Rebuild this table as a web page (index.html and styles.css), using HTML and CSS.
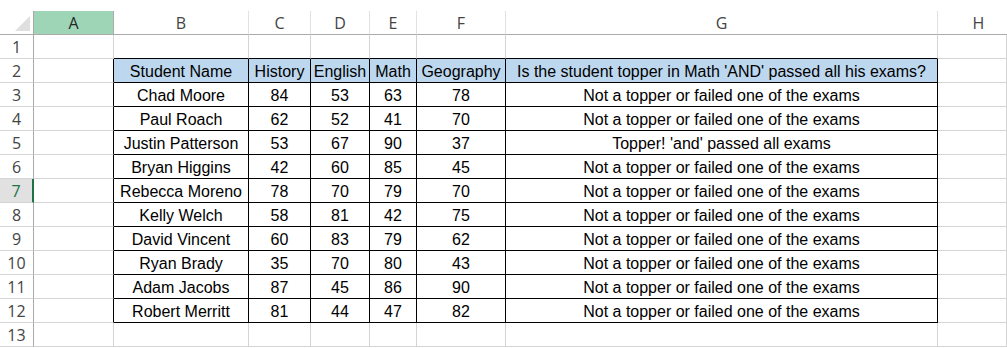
FILE: index.html
```html
<!DOCTYPE html>
<html>
<head>
<meta charset="utf-8">
<link rel="stylesheet" href="styles.css">
</head>
<body>
<div class="sheet">
  <div class="corner"><span class="tri"></span></div>
  <div class="ch sel">A</div>
  <div class="ch">B</div>
  <div class="ch">C</div>
  <div class="ch">D</div>
  <div class="ch">E</div>
  <div class="ch">F</div>
  <div class="ch">G</div>
  <div class="ch last">H</div>

  <div class="rh">1</div>
  <div class="c"></div>
  <div class="c tb"></div><div class="c tb"></div><div class="c tb"></div><div class="c tb"></div><div class="c tb"></div><div class="c tb"></div>
  <div class="c"></div>

  <div class="rh">2</div>
  <div class="c tl"></div>
  <div class="c t hd">Student Name</div>
  <div class="c t hd">History</div>
  <div class="c t hd">English</div>
  <div class="c t hd">Math</div>
  <div class="c t hd">Geography</div>
  <div class="c t hd">Is the student topper in Math 'AND' passed all his exams?</div>
  <div class="c"></div>

  <div class="rh">3</div>
  <div class="c tl"></div>
  <div class="c t">Chad Moore</div><div class="c t">84</div><div class="c t">53</div><div class="c t">63</div><div class="c t">78</div>
  <div class="c t">Not a topper or failed one of the exams</div>
  <div class="c"></div>

  <div class="rh">4</div>
  <div class="c tl"></div>
  <div class="c t">Paul Roach</div><div class="c t">62</div><div class="c t">52</div><div class="c t">41</div><div class="c t">70</div>
  <div class="c t">Not a topper or failed one of the exams</div>
  <div class="c"></div>

  <div class="rh">5</div>
  <div class="c tl"></div>
  <div class="c t">Justin Patterson</div><div class="c t">53</div><div class="c t">67</div><div class="c t">90</div><div class="c t">37</div>
  <div class="c t">Topper! 'and' passed all exams</div>
  <div class="c"></div>

  <div class="rh">6</div>
  <div class="c tl"></div>
  <div class="c t">Bryan Higgins</div><div class="c t">42</div><div class="c t">60</div><div class="c t">85</div><div class="c t">45</div>
  <div class="c t">Not a topper or failed one of the exams</div>
  <div class="c"></div>

  <div class="rh rsel">7</div>
  <div class="c tl"></div>
  <div class="c t">Rebecca Moreno</div><div class="c t">78</div><div class="c t">70</div><div class="c t">79</div><div class="c t">70</div>
  <div class="c t">Not a topper or failed one of the exams</div>
  <div class="c"></div>

  <div class="rh">8</div>
  <div class="c tl"></div>
  <div class="c t">Kelly Welch</div><div class="c t">58</div><div class="c t">81</div><div class="c t">42</div><div class="c t">75</div>
  <div class="c t">Not a topper or failed one of the exams</div>
  <div class="c"></div>

  <div class="rh">9</div>
  <div class="c tl"></div>
  <div class="c t">David Vincent</div><div class="c t">60</div><div class="c t">83</div><div class="c t">79</div><div class="c t">62</div>
  <div class="c t">Not a topper or failed one of the exams</div>
  <div class="c"></div>

  <div class="rh">10</div>
  <div class="c tl"></div>
  <div class="c t">Ryan Brady</div><div class="c t">35</div><div class="c t">70</div><div class="c t">80</div><div class="c t">43</div>
  <div class="c t">Not a topper or failed one of the exams</div>
  <div class="c"></div>

  <div class="rh">11</div>
  <div class="c tl"></div>
  <div class="c t">Adam Jacobs</div><div class="c t">87</div><div class="c t">45</div><div class="c t">86</div><div class="c t">90</div>
  <div class="c t">Not a topper or failed one of the exams</div>
  <div class="c"></div>

  <div class="rh">12</div>
  <div class="c tl"></div>
  <div class="c t">Robert Merritt</div><div class="c t">81</div><div class="c t">44</div><div class="c t">47</div><div class="c t">82</div>
  <div class="c t">Not a topper or failed one of the exams</div>
  <div class="c"></div>

  <div class="rh">13</div>
  <div class="c"></div><div class="c"></div><div class="c"></div><div class="c"></div><div class="c"></div><div class="c"></div><div class="c"></div><div class="c"></div>
</div>
</body>
</html>
```

FILE: styles.css
```css
html, body {
  margin: 0;
  padding: 0;
  background: #ffffff;
}
body {
  padding-top: 11px;
  overflow: hidden;
}
.sheet {
  display: grid;
  grid-template-columns: 34px 80px 135px 62px 59px 47px 89px 432px minmax(0, 1fr);
  grid-template-rows: repeat(14, 24px);
  font-family: "Liberation Sans", Arial, sans-serif;
  font-size: 16px;
  color: #000;
}
.corner {
  position: relative;
  border-right: 1px solid #ababab;
  border-bottom: 1px solid #ababab;
  background: #fff;
}
.tri {
  position: absolute;
  right: 3px;
  bottom: 3px;
  width: 0;
  height: 0;
  border-left: 15px solid transparent;
  border-bottom: 15px solid #dfdfdf;
}
.ch {
  border-right: 1px solid #e1e1e1;
  border-bottom: 1px solid #ababab;
  font-family: "Open Sans", "Noto Sans", sans-serif;
  font-size: 16px;
  color: #444;
  text-align: center;
  padding-top: 1px;
  line-height: 22px;
  background: #fff;
}
.ch.sel {
  background: #9fd5b7;
  color: #262626;
  border-right-color: #ababab;
}
.ch.last {
  border-right: none;
  padding-left: 12px;
}
.rh {
  border-right: 1px solid #ababab;
  border-bottom: 1px solid #d4d4d4;
  font-family: "Open Sans", "Noto Sans", sans-serif;
  font-size: 16px;
  color: #444;
  text-align: center;
  padding-top: 1px;
  line-height: 22px;
}
.rh.rsel {
  background: #e1e1e1;
  border-right: 2px solid #217346;
  color: #217346;
}
.c {
  border-right: 1px solid #d4d4d4;
  border-bottom: 1px solid #d4d4d4;
  text-align: center;
  line-height: 23px;
  white-space: nowrap;
  overflow: hidden;
}
.c.tb {
  border-bottom-color: #000;
}
.c.tl {
  border-right-color: #000;
}
.c.t {
  border-right-color: #000;
  border-bottom-color: #000;
  padding-top: 2px;
  line-height: 21px;
}
.c.hd {
  background: #bdd7ee;
}
```
